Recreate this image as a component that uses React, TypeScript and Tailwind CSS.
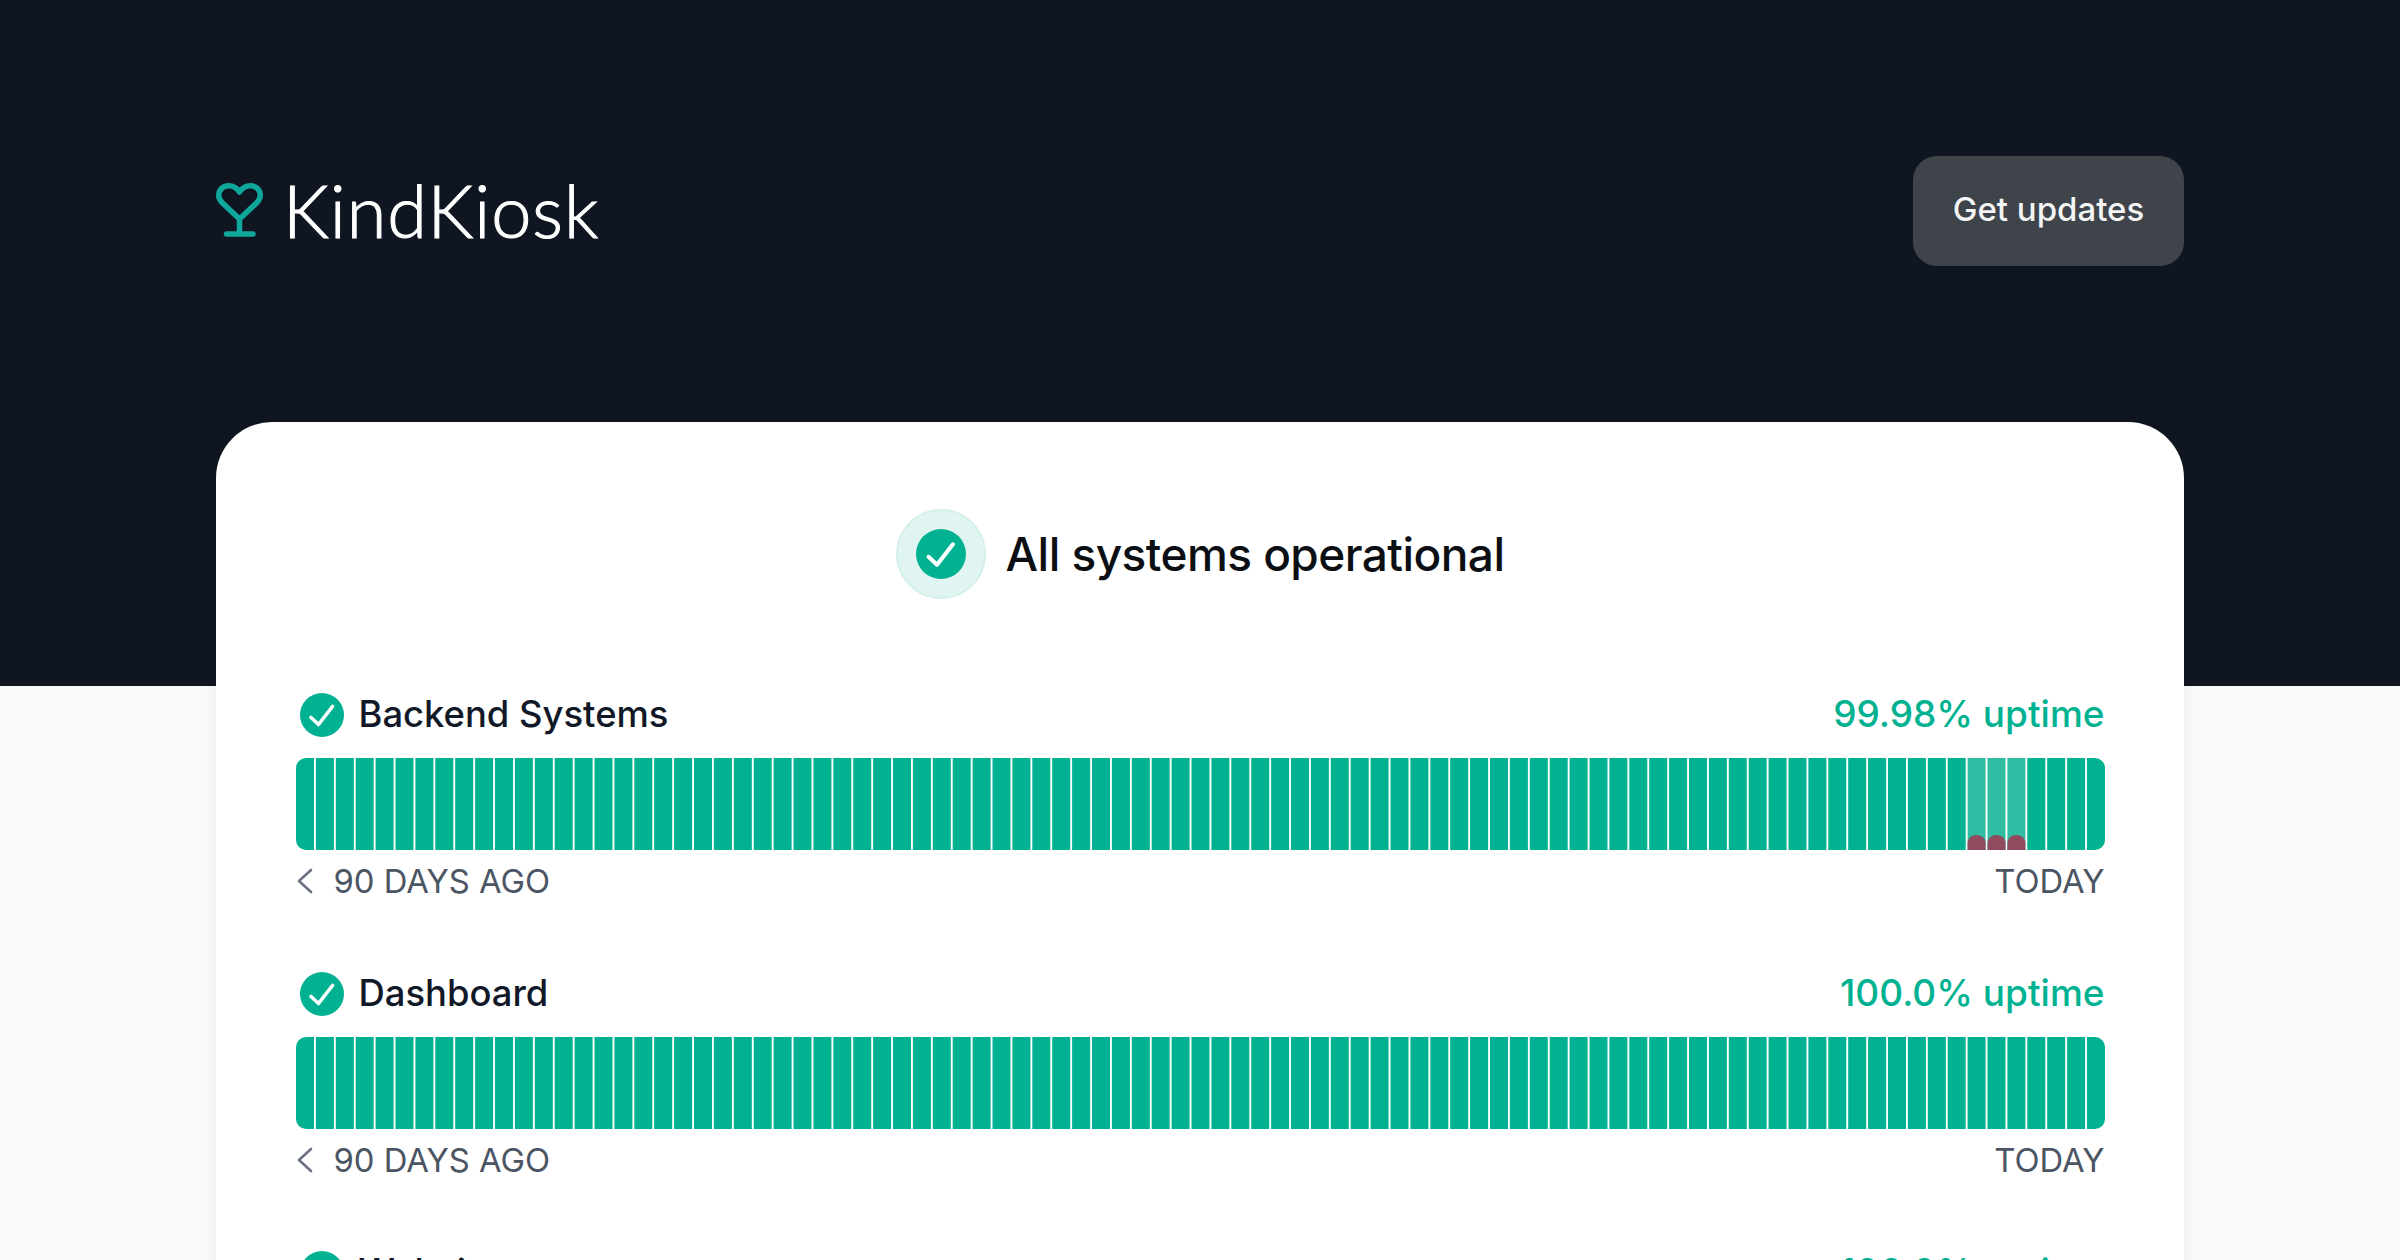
import React from "react";

const GREEN = "#00b291";

function Check({ size }: { size: number }) {
  return (
    <svg width={size} height={size} viewBox="0 0 44 44" className="shrink-0" aria-hidden>
      <circle cx="22" cy="22" r="22" fill={GREEN} />
      <path d="M11 24.5 L18.5 31.5 L32.5 13.5" fill="none" stroke="#fff" strokeWidth="3.6" strokeLinecap="round" strokeLinejoin="round" />
    </svg>
  );
}

function Bars({ incidents }: { incidents: number[] }) {
  const w = 1809;
  const gap = 1.9;
  const bw = (w - gap * 90) / 91;
  return (
    <svg width={w} height={92} viewBox={`0 0 ${w} 92`} className="block rounded-[10px]" aria-hidden>
      {Array.from({ length: 91 }, (_, i) => {
        const x = i * (bw + gap);
        const bad = incidents.includes(i);
        return (
          <g key={i}>
            <rect x={x} y={0} width={bw} height={92} fill={bad ? "#30bda3" : GREEN} />
            {bad && <path d={`M${x} 92 V${92 - 7} a${bw / 2} 8 0 0 1 ${bw} 0 V92 Z`} fill="#924a5e" />}
          </g>
        );
      })}
    </svg>
  );
}

function Row({ name, uptime, incidents = [] }: { name: string; uptime: string; incidents?: number[] }) {
  return (
    <section className="mb-[70px]">
      <div className="flex items-center justify-between h-[44px] mb-[21px]">
        <div className="flex items-center gap-[15px] pl-[4px]">
          <Check size={44} />
          <span className="text-[36.4px] font-medium text-[#111827] leading-none pb-[2px]">{name}</span>
        </div>
        <span className="text-[37px] font-medium text-[#00b291] leading-none pb-[3px]">{uptime}</span>
      </div>
      <Bars incidents={incidents} />
      <div className="flex items-center justify-between h-[40px] mt-[12px] text-[32.8px] text-[#4b5563] leading-none pb-[2px]">
        <div className="flex items-center gap-[19px]">
          <svg width="19" height="26" viewBox="0 0 19 26" fill="none" stroke="#6b7280" strokeWidth="2.6" strokeLinecap="round" strokeLinejoin="round" aria-hidden>
            <path d="M15 2 L3 13 L15 24" />
          </svg>
          <span>90 DAYS AGO</span>
        </div>
        <span>TODAY</span>
      </div>
    </section>
  );
}

export default function App() {
  return (
    <div className="h-[1260px] overflow-hidden bg-[#f9fafc] font-['Inter',sans-serif]">
      <header className="h-[686px] bg-[#0f1621] px-[216px] pt-[156px]">
        <div className="flex items-center justify-between h-[110px]">
          <div className="flex items-center gap-[20px] pb-[1px]">
            <svg width="47" height="56" viewBox="0 0 47 56" fill="none" stroke="#0fa79c" strokeWidth="5.5" strokeLinecap="round" strokeLinejoin="round" aria-hidden>
              <path d="M23.5 36 L6.5 20 C4 17.5 2.75 15 2.75 12.5 C2.75 7 7 2.75 12.5 2.75 C17 2.75 21 5 23.5 9 C26 5 30 2.75 34.5 2.75 C40 2.75 44.25 7 44.25 12.5 C44.25 15 43 17.5 40.5 20 Z" />
              <path d="M23.5 36 V50.5" />
              <path d="M10.5 51 H37" />
            </svg>
            <span className="font-['Lato',sans-serif] font-light text-[72px] tracking-[1px] [-webkit-text-stroke:1.1px_#ffffff] leading-none text-white pb-[2px]">KindKiosk</span>
          </div>
          <button className="w-[271px] h-[110px] rounded-[24px] bg-[#3f434a] text-[#f3f4f6] text-[33px] font-medium flex items-center justify-center pb-[2px]">
            Get updates
          </button>
        </div>
      </header>
      <main className="relative mx-auto w-[1968px] -mt-[264px] rounded-t-[56px] bg-white px-[79.5px] pt-[87px] shadow-[0_0_14px_rgba(0,0,0,0.07)]">
        <div className="flex items-center justify-center gap-[20px] mb-[94px]">
          <div className="flex items-center justify-center w-[90px] h-[90px] rounded-full bg-[#e0f5f1] border-2 border-[#d5f0ea]">
            <Check size={50} />
          </div>
          <h1 className="text-[46px] tracking-[-0.55px] font-medium text-[#0b0f14] leading-none">All systems operational</h1>
        </div>
        <Row name="Backend Systems" uptime="99.98% uptime" incidents={[84, 85, 86]} />
        <Row name="Dashboard" uptime="100.0% uptime" />
        <Row name="Website" uptime="100.0% uptime" />
      </main>
    </div>
  );
}
